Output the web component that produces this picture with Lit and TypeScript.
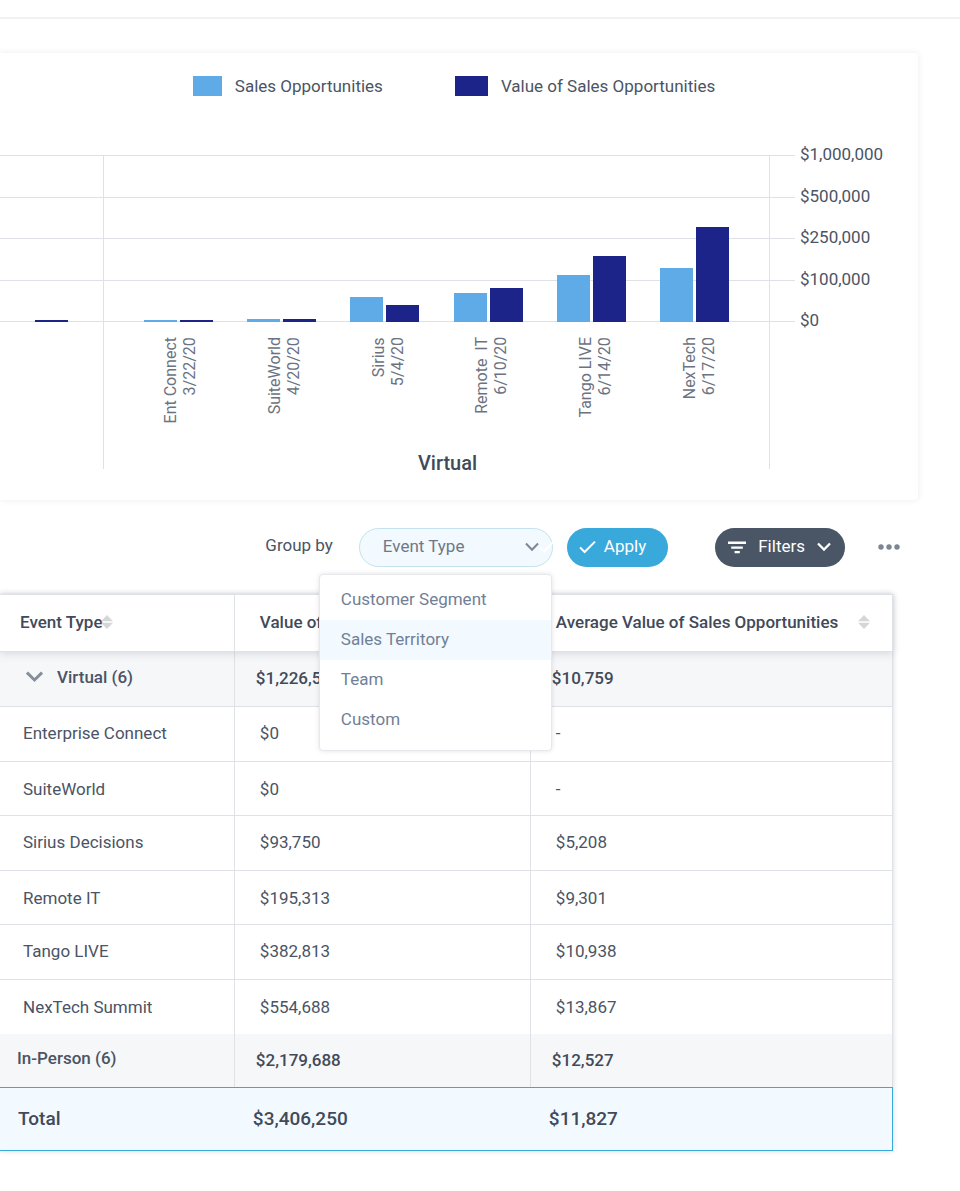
import { LitElement, html, css, nothing } from "lit";
import { customElement, property, state } from "lit/decorators.js";

interface Campaign {
  name: string;
  date: string;
  count: number;
  value: number;
}

interface Row {
  kind: "group" | "detail" | "subtotal" | "total";
  name: string;
  value: string;
  average: string;
}

const campaigns: Campaign[] = [
  { name: "Ent Connect", date: "3/22/20", count: 2, value: 2 },
  { name: "SuiteWorld", date: "4/20/20", count: 3, value: 3 },
  { name: "Sirius", date: "5/4/20", count: 25, value: 17 },
  { name: "Remote  IT", date: "6/10/20", count: 29, value: 34 },
  { name: "Tango LIVE", date: "6/14/20", count: 47, value: 66 },
  { name: "NexTech", date: "6/17/20", count: 54, value: 95 },
];

const axis = ["$1,000,000", "$500,000", "$250,000", "$100,000", "$0"];

const rows: Row[] = [
  { kind: "group", name: "Virtual (6)", value: "$1,226,563", average: "$10,759" },
  { kind: "detail", name: "Enterprise Connect", value: "$0", average: "-" },
  { kind: "detail", name: "SuiteWorld", value: "$0", average: "-" },
  { kind: "detail", name: "Sirius Decisions", value: "$93,750", average: "$5,208" },
  { kind: "detail", name: "Remote IT", value: "$195,313", average: "$9,301" },
  { kind: "detail", name: "Tango LIVE", value: "$382,813", average: "$10,938" },
  { kind: "detail", name: "NexTech Summit", value: "$554,688", average: "$13,867" },
  { kind: "subtotal", name: "In-Person (6)", value: "$2,179,688", average: "$12,527" },
  { kind: "total", name: "Total", value: "$3,406,250", average: "$11,827" },
];

const groupings = ["Customer Segment", "Sales Territory", "Team", "Custom"];

@customElement("sales-chart")
export class SalesChart extends LitElement {
  static styles = css`
    :host {
      display: block;
      padding: 23px 0 31px;
      border-radius: 0 4px 4px 0;
      background: #fff;
      box-shadow: 0 0 6px rgba(60, 66, 87, 0.1);
      color: #4a5465;
      font-size: 17px;
      line-height: 20px;
    }
    * {
      box-sizing: border-box;
    }
    ul {
      margin: 0;
      padding: 0;
      list-style: none;
    }
    .legend {
      display: flex;
      justify-content: center;
      gap: 72px;
      padding-right: 10px;
    }
    .legend li {
      display: flex;
      gap: 13px;
    }
    .swatch {
      width: 29px;
      height: 20px;
    }
    .count {
      background: #5fabe8;
    }
    .value {
      background: #1c248a;
    }
    .swatch.value {
      width: 33px;
    }
    .chart {
      display: grid;
      grid-template-columns: 1fr 118px;
      column-gap: 5px;
      margin-top: 48px;
    }
    .plot {
      display: grid;
      margin-top: 11px;
    }
    .lines,
    .sections {
      grid-area: 1 / 1;
    }
    .lines {
      display: flex;
      flex-direction: column;
      justify-content: space-between;
      height: 167px;
    }
    .lines li {
      height: 1px;
      background: #dfe1e6;
    }
    .sections {
      display: grid;
      grid-template-columns: 103fr 667fr 25fr;
      height: 314px;
    }
    .virtual {
      display: flex;
      flex-direction: column;
      border-left: 1px solid #dfe1e6;
      border-right: 1px solid #dfe1e6;
    }
    .bars,
    .names {
      display: grid;
      grid-template-columns: repeat(6, 1fr);
      padding: 0 23px;
    }
    .bars {
      height: 167px;
    }
    .pair {
      display: flex;
      align-items: flex-end;
      justify-content: center;
      gap: 3px;
    }
    .in-person {
      display: flex;
      align-items: flex-end;
      height: 167px;
      padding-left: 35px;
    }
    .bar {
      width: 33px;
    }
    .names {
      flex: 1;
      padding: 15px 18px 0 24px;
    }
    .name {
      display: flex;
      justify-content: center;
      align-items: flex-start;
      color: #6b7382;
      font-size: 16px;
      line-height: 19px;
      white-space: pre;
    }
    .turned {
      writing-mode: vertical-rl;
      transform: rotate(180deg);
      text-align: right;
    }
    .title {
      margin: 0;
      padding: 0 0 0 22px;
      text-align: center;
      color: #414a5a;
      font-size: 20px;
      font-weight: 500;
      line-height: 12px;
    }
    .axis {
      display: flex;
      flex-direction: column;
      justify-content: space-between;
      height: 186px;
    }
  `;

  render() {
    return html`
      <ul class="legend">
        <li><span class="swatch count"></span>Sales Opportunities</li>
        <li><span class="swatch value"></span>Value of Sales Opportunities</li>
      </ul>
      <div class="chart">
        <div class="plot">
          <ul class="lines">
            ${axis.map(() => html`<li></li>`)}
          </ul>
          <div class="sections">
            <div class="in-person"><div class="bar value" style="height:2px"></div></div>
            <div class="virtual">
              <div class="bars">
                ${campaigns.map(
                  (c) => html`<div class="pair">
                    <div class="bar count" style="height:${c.count}px"></div>
                    <div class="bar value" style="height:${c.value}px"></div>
                  </div>`
                )}
              </div>
              <div class="names">
                ${campaigns.map(
                  (c) => html`<div class="name"><div class="turned">${c.name}<br />${c.date}</div></div>`
                )}
              </div>
              <h2 class="title">Virtual</h2>
            </div>
          </div>
        </div>
        <ul class="axis">
          ${axis.map((a) => html`<li>${a}</li>`)}
        </ul>
      </div>
    `;
  }
}

@customElement("report-toolbar")
export class ReportToolbar extends LitElement {
  @state() private open = true;

  static styles = css`
    :host {
      display: flex;
      align-items: center;
      justify-content: flex-end;
      color: #4a5465;
      font-size: 17px;
      line-height: 20px;
    }
    * {
      box-sizing: border-box;
    }
    button,
    select {
      font: inherit;
      border: 0;
      margin: 0;
      cursor: pointer;
    }
    .label {
      margin-right: 26px;
      padding-bottom: 6px;
    }
    .field {
      position: relative;
      width: 194px;
      margin-right: 14px;
    }
    .select {
      display: block;
      width: 100%;
      height: 39px;
      padding: 0 40px 4px 23px;
      border: 1px solid #c3e2ee;
      border-radius: 20px;
      background: #f2faff;
      color: #6f7889;
      appearance: none;
    }
    .arrow {
      position: absolute;
      top: 13px;
      right: 13px;
      pointer-events: none;
    }
    .tick {
      position: absolute;
      top: 13px;
      right: 0;
      pointer-events: none;
    }
    .menu {
      position: absolute;
      z-index: 2;
      top: 46px;
      right: 1px;
      width: 233px;
      margin: 0;
      padding: 5px 0 10px;
      border: 1px solid #e6e8eb;
      border-radius: 4px;
      background: #fff;
      box-shadow: 0 0 5px rgba(60, 66, 87, 0.14);
      list-style: none;
    }
    .item {
      display: block;
      width: 100%;
      height: 40px;
      padding: 0 21px 2px;
      background: none;
      color: #718096;
      text-align: left;
    }
    .item.active {
      background: #f2faff;
    }
    .pill {
      display: flex;
      align-items: center;
      height: 39px;
      border-radius: 20px;
      color: #fff;
    }
    .apply {
      gap: 8px;
      margin-right: 47px;
      padding: 0 22px 2px 12px;
      background: #39a8db;
    }
    .filters {
      gap: 12px;
      margin-right: 33px;
      padding: 0 14px 2px 13px;
      background: #4a5565;
    }
    .text {
      padding-bottom: 2px;
    }
    .more {
      display: block;
      padding: 0 0 2px;
      background: none;
    }
    svg {
      display: block;
      flex: none;
    }
  `;

  render() {
    return html`
      <label class="label" for="grouping">Group by</label>
      <div class="field">
        <select class="select" id="grouping">
          <option>Event Type</option>
          ${groupings.map((g) => html`<option>${g}</option>`)}
        </select>
        <svg class="arrow" width="16" height="12" viewBox="0 0 16 12" fill="none" stroke="#7f8794" stroke-width="2">
          <path d="M2 2.5 L8 8.8 L14 2.5" />
        </svg>
        <svg class="tick" width="14" height="13" viewBox="0 0 14 13" fill="none" stroke="#fff" stroke-width="2">
          <path d="M1 7 L5 10.5 L13.5 1.5" />
        </svg>
        ${this.open
          ? html`<ul class="menu">
              ${groupings.map(
                (g) => html`<li>
                  <button class="item ${g === "Sales Territory" ? "active" : ""}" @click=${() => (this.open = false)}>
                    ${g}
                  </button>
                </li>`
              )}
            </ul>`
          : nothing}
      </div>
      <button class="pill apply">
        <svg width="17" height="14" viewBox="0 0 17 14" fill="none" stroke="#fff" stroke-width="2">
          <path d="M1 7.4 L5.6 12 L16 1.6" />
        </svg>
        <span class="text">Apply</span>
      </button>
      <button class="pill filters">
        <svg width="18" height="14" viewBox="0 0 18 14" fill="#fff">
          <path d="M0 1.5 H18 V4 H0 Z M3.2 6.5 H14.8 V8.8 H3.2 Z M6.6 11 H11.8 V13.2 H6.6 Z" />
        </svg>
        <span class="text">Filters</span>
        <svg width="14" height="10" viewBox="0 0 14 10" fill="none" stroke="#fff" stroke-width="2.2">
          <path d="M1 1.4 L7 7.6 L13 1.4" />
        </svg>
      </button>
      <button class="more" aria-label="More">
        <svg width="22" height="6" viewBox="0 0 22 6" fill="#7d8593">
          <circle cx="3" cy="3" r="2.7" />
          <circle cx="11" cy="3" r="2.7" />
          <circle cx="19" cy="3" r="2.7" />
        </svg>
      </button>
    `;
  }
}

@customElement("sales-table")
export class SalesTable extends LitElement {
  @property({ attribute: false }) rows: Row[] = [];

  static styles = css`
    :host {
      display: block;
      color: #4a5465;
      font-size: 17px;
      line-height: 20px;
    }
    * {
      box-sizing: border-box;
    }
    table {
      width: 100%;
      border-collapse: separate;
      border-spacing: 0;
      table-layout: fixed;
      background: #fff;
      box-shadow: 0 0 5px rgba(60, 66, 87, 0.22);
    }
    .first {
      width: 26.3%;
    }
    .second {
      width: 33.15%;
    }
    th,
    td {
      padding: 0 25px;
      border-bottom: 1px solid #dfe1e6;
      border-right: 1px solid #dfe1e6;
      text-align: left;
      font-weight: 400;
      white-space: nowrap;
    }
    thead tr {
      position: relative;
      box-shadow: 0 2px 8px rgba(60, 66, 87, 0.16);
    }
    thead th {
      height: 58px;
      padding-bottom: 2px;
      border-top: 1px solid #dfe1e6;
      background: #fff;
      color: #414a5a;
      font-weight: 500;
    }
    thead th:first-child {
      padding-left: 20px;
    }
    .head {
      display: flex;
      align-items: center;
      gap: 20px;
    }
    .head.tight {
      gap: 0;
    }
    .head.tight svg {
      margin-left: -2px;
    }
    .detail td,
    .detail th {
      height: 55px;
      padding-bottom: 2px;
    }
    .detail:nth-child(odd) td,
    .detail:nth-child(odd) th {
      height: 54px;
      padding-bottom: 0;
    }
    .detail th {
      padding-left: 23px;
    }
    .detail:nth-child(7) td,
    .detail:nth-child(7) th {
      border-bottom: 0;
    }
    .group th,
    .group td {
      height: 55px;
      background: #f6f7f9;
    }
    .subtotal th,
    .subtotal td {
      height: 53px;
      border-bottom: 0;
      background: #f6f7f9;
    }
    .group td,
    .subtotal td {
      padding-left: 21px;
      padding-bottom: 2px;
      color: #414a5a;
      font-weight: 500;
    }
    .group th,
    .subtotal th {
      padding-left: 17px;
      padding-bottom: 5px;
      font-weight: 500;
    }
    .total th,
    .total td {
      height: 64px;
      border-top: 1px solid #39a8db;
      border-bottom: 1px solid #39a8db;
      border-right: 0;
      padding-left: 18px;
      background: #f2faff;
      color: #414a5a;
      font-size: 19px;
      font-weight: 500;
    }
    .total td:last-child {
      border-right: 1px solid #39a8db;
    }
    .toggle {
      display: flex;
      align-items: center;
      gap: 14px;
      padding: 0 0 0 9px;
      border: 0;
      background: none;
      color: inherit;
      font: inherit;
      cursor: pointer;
    }
    svg {
      display: block;
      flex: none;
    }
  `;

  private sorter() {
    return html`<svg width="12" height="14" viewBox="0 0 12 14" fill="#d5d6d8">
      <path d="M6 0 L12 6.2 H0 Z M0 7.8 H12 L6 14 Z" />
    </svg>`;
  }

  render() {
    return html`
      <table>
        <colgroup>
          <col class="first" />
          <col class="second" />
          <col />
        </colgroup>
        <thead>
          <tr>
            <th scope="col"><div class="head tight">Event Type${this.sorter()}</div></th>
            <th scope="col"><div class="head">Value of Sales</div></th>
            <th scope="col"><div class="head">Average Value of Sales Opportunities${this.sorter()}</div></th>
          </tr>
        </thead>
        <tbody>
          ${this.rows.map(
            (r) => html`<tr class=${r.kind}>
              <th scope="row">
                ${r.kind === "group"
                  ? html`<button class="toggle">
                      <svg width="17" height="12" viewBox="0 0 17 12" fill="none" stroke="#868e99" stroke-width="3">
                        <path d="M1 1.6 L8.5 9 L16 1.6" />
                      </svg>
                      ${r.name}
                    </button>`
                  : r.name}
              </th>
              <td>${r.value}</td>
              <td>${r.average}</td>
            </tr>`
          )}
        </tbody>
      </table>
    `;
  }
}

@customElement("app-root")
export class AppRoot extends LitElement {
  static styles = css`
    :host {
      display: block;
      min-height: 100vh;
      overflow: hidden;
      background: #fff;
      font-family: Roboto, "Noto Sans", sans-serif;
    }
    .topbar {
      height: 19px;
      box-sizing: border-box;
      border-bottom: 2px solid #f1f1f3;
    }
    .chart {
      margin: 34px 42px 28px 0;
    }
    .toolbar {
      margin-right: 60px;
    }
    .table {
      margin: 27px 67px 40px 0;
    }
  `;

  render() {
    return html`
      <header class="topbar"></header>
      <main>
        <sales-chart class="chart"></sales-chart>
        <report-toolbar class="toolbar"></report-toolbar>
        <sales-table class="table" .rows=${rows}></sales-table>
      </main>
    `;
  }
}
